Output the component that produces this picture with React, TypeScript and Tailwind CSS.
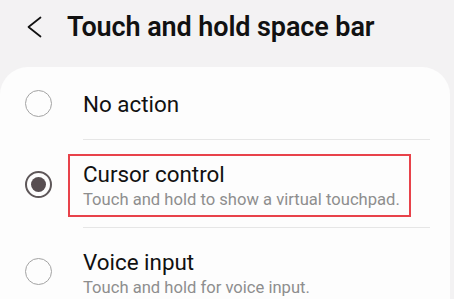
import React from 'react'

type Option = {
  id: string
  title: string
  subtitle?: string
}

const OPTIONS: Option[] = [
  { id: 'none', title: 'No action' },
  { id: 'cursor', title: 'Cursor control', subtitle: 'Touch and hold to show a virtual touchpad.' },
  { id: 'voice', title: 'Voice input', subtitle: 'Touch and hold for voice input.' },
]

function Radio({ checked }: { checked: boolean }) {
  if (checked) {
    return (
      <div className="w-[27px] h-[27px] shrink-0 rounded-full border-[2px] border-[#5e5759] grid place-items-center">
        <div className="w-[15px] h-[15px] rounded-full bg-[#574e51]" />
      </div>
    )
  }
  return <div className="w-[27px] h-[27px] shrink-0 rounded-full border-[1.5px] border-[#a3a3a3]" />
}

export default function App() {
  const selected = 'cursor'

  return (
    <div
      className="w-[454px] h-[299px] overflow-hidden bg-[#f3f2f3] text-[#111]"
      style={{ fontFamily: 'Roboto, "Noto Sans", sans-serif' }}
    >
      {/* header */}
      <div className="flex items-center gap-[24px] pl-[26px] pt-[11px] pb-[24px]">
        <svg width="17" height="22" viewBox="0 0 17 22" fill="none" className="shrink-0">
          <polyline points="14.5,1.5 2.5,11 14.5,20.5" stroke="#111" strokeWidth="1.7" strokeLinecap="round" strokeLinejoin="round" />
        </svg>
        <div className="text-[27px] leading-[32px] font-semibold tracking-[-0.1px]">Touch and hold space bar</div>
      </div>

      {/* options card */}
      <div className="w-[450px] h-[260px] bg-[#fdfdfd] rounded-t-[28px]">
        {OPTIONS.map((opt, i) => {
          const last = i === OPTIONS.length - 1
          return (
            <div key={opt.id} className="flex items-center pl-[25px]">
              <Radio checked={opt.id === selected} />
              <div
                className={
                  'ml-[31px] flex-1 mr-[20px] ' +
                  (opt.subtitle ? 'pt-[20px] pb-[17px] ' : 'pt-[23px] pb-[21px] ') +
                  (last ? '' : 'border-b border-[#e6e6e6]')
                }
              >
                <div className="relative">
                  <div className="text-[22.4px] leading-[28px]">{opt.title}</div>
                  {opt.subtitle && (
                    <div className="mt-[2px] text-[16.6px] leading-[20px] text-[#8e8e8e]">{opt.subtitle}</div>
                  )}
                  {opt.id === selected && (
                    <div className="absolute left-[-15px] top-[-6px] w-[343px] h-[63px] border-[2px] border-[#e8424a] pointer-events-none" />
                  )}
                </div>
              </div>
            </div>
          )
        })}
      </div>
    </div>
  )
}
